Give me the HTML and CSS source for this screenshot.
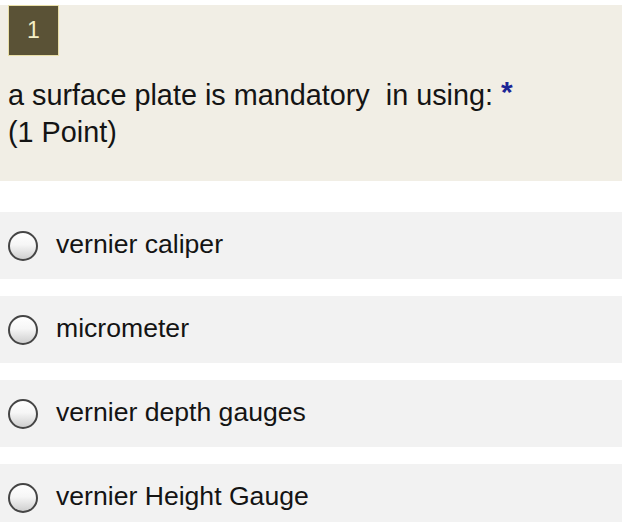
FILE: index.html
```html
<!DOCTYPE html>
<html lang="en">
<head>
<meta charset="utf-8">
<title>Question 1</title>
<link rel="stylesheet" href="styles.css">
</head>
<body>
<div class="page">
  <section class="question">
    <div class="badge">1</div>
    <div class="title">a surface plate is mandatory&nbsp; in using: <span class="req">*</span><br>(1 Point)</div>
  </section>
  <div class="options">
    <label class="option"><span class="radio"></span><span class="label">vernier caliper</span></label>
    <label class="option"><span class="radio"></span><span class="label">micrometer</span></label>
    <label class="option"><span class="radio"></span><span class="label">vernier depth gauges</span></label>
    <label class="option"><span class="radio"></span><span class="label">vernier Height Gauge</span></label>
  </div>
</div>
</body>
</html>
```
FILE: styles.css
```css
html, body {
  margin: 0;
  padding: 0;
  background: #ffffff;
}
body {
  font-family: "Liberation Sans", Arial, sans-serif;
  color: #141414;
  overflow: hidden;
}
.page {
  padding: 5px 4px 0 0;
}
.question {
  background: #f1eee5;
  height: 176px;
  box-sizing: border-box;
  padding-left: 8px;
}
.badge {
  width: 51px;
  height: 51px;
  box-sizing: border-box;
  background: #5a5236;
  border: 1px solid #e9dfa8;
  color: #f4efc6;
  font-size: 23px;
  display: flex;
  align-items: center;
  justify-content: center;
}
.title {
  margin-top: 17px;
  font-size: 28.8px;
  line-height: 37px;
}
.req {
  color: #1c2696;
  font-size: 30px;
  font-weight: bold;
  vertical-align: 3px;
}
.options {
  margin-top: 31px;
  display: flex;
  flex-direction: column;
  gap: 17px;
}
.option {
  height: 67px;
  background: #f2f2f2;
  display: flex;
  align-items: center;
  gap: 18px;
  padding-left: 8px;
}
.radio {
  width: 30px;
  height: 30px;
  box-sizing: border-box;
  border-radius: 50%;
  border: 2px solid #454545;
  background: linear-gradient(#ffffff, #f6f6f6 45%, #cfcfcf);
  flex: none;
}
.label {
  font-size: 26.6px;
  position: relative;
  top: -1px;
}
```
